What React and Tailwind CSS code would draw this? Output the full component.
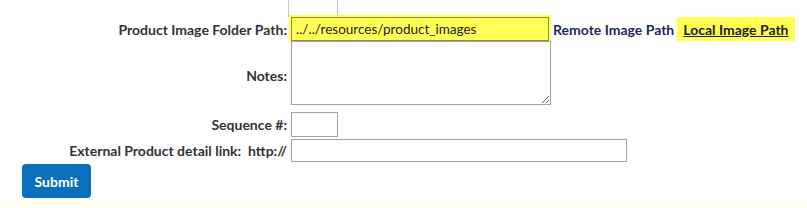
export default function App() {
  const label = "text-right font-bold text-[14px] text-[#333] pr-[4px]";

  return (
    <div className="w-[807px] h-[208px] bg-white font-['Lato','Liberation_Sans',sans-serif] overflow-hidden">
      <div className="h-[200px]">
        {/* tail of the field above */}
        <div className="grid grid-cols-[288px_1fr] h-[17px]">
          <div />
          <div className="w-[50px] h-[17px] border-x border-[#c8c8c8]" />
        </div>

        {/* Product Image Folder Path */}
        <div className="grid grid-cols-[291px_1fr] items-center h-[24px]">
          <div className={label}>Product Image Folder Path:</div>
          <div className="flex items-center">
            <input
              readOnly
              value="../../resources/product_images"
              className="w-[258px] h-[24px] px-[4px] bg-[#ffff55] border border-[#8d8d4a] ring-2 ring-[#ffff55] text-[13.5px] text-[#222] outline-none"
            />
            <span className="ml-[4px] font-bold text-[14px] text-[#1c2a5c]">Remote Image Path</span>
            <span className="ml-[3px] px-[6px] h-[24px] flex items-center bg-[#ffff55] font-bold text-[14px] text-[#222] underline">
              Local Image Path
            </span>
          </div>
        </div>

        {/* Notes */}
        <div className="grid grid-cols-[291px_1fr] items-center h-[64px]">
          <div className={`${label} pt-[4px]`}>Notes:</div>
          <textarea className="w-[260px] h-[64px] border border-[#a3a3a3] resize-y outline-none bg-white" />
        </div>

        {/* Sequence */}
        <div className="grid grid-cols-[291px_1fr] items-center h-[25px] mt-[7px]">
          <div className={label}>Sequence #:</div>
          <input className="w-[47px] h-[25px] border border-[#a3a3a3] outline-none" />
        </div>

        {/* External link */}
        <div className="grid grid-cols-[291px_1fr] items-center h-[23px] mt-[2px]">
          <div className={label}>
            External Product detail link:&nbsp; http://
          </div>
          <input className="w-[336px] h-[23px] border border-[#a3a3a3] outline-none" />
        </div>

        <div className="pl-[22px] mt-[2px]">
          <button className="w-[69px] h-[34px] rounded-[4px] bg-[#0b6fc0] text-white font-bold text-[14px]">
            Submit
          </button>
        </div>
      </div>
      <div className="h-[8px] bg-[#fffef0]" />
    </div>
  );
}
